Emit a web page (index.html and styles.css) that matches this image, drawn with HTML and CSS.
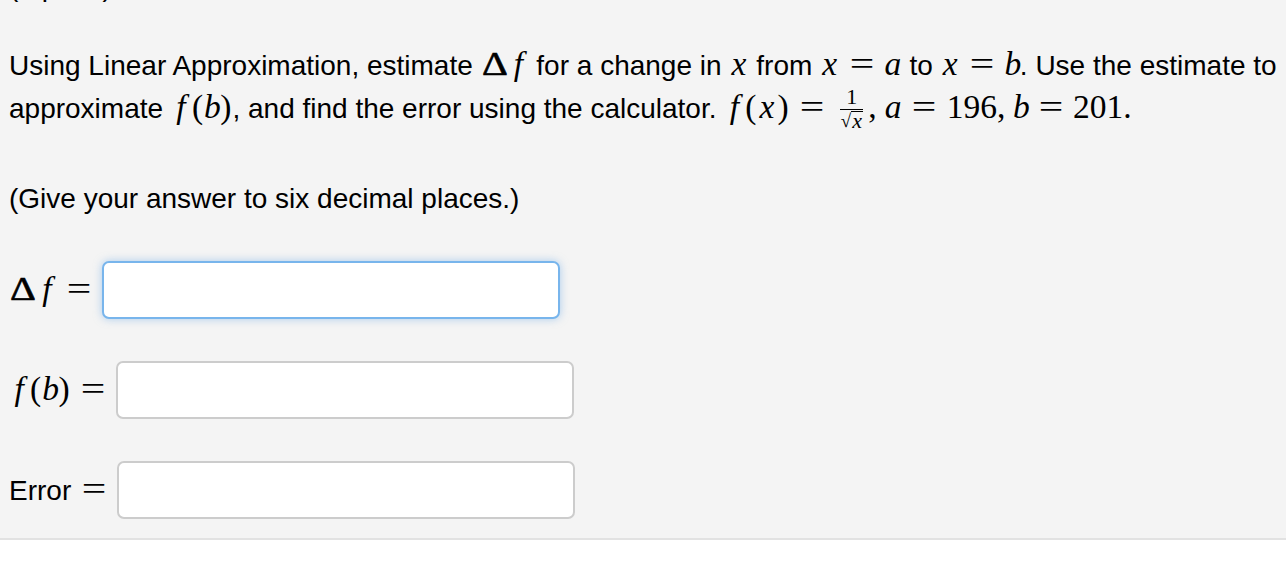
FILE: index.html
```html
<!DOCTYPE html>
<html>
<head>
<meta charset="utf-8">
<link rel="stylesheet" href="styles.css">
</head>
<body>
<div class="panel">
  <p class="points">(1 point)</p>
  <div class="question">
    <div class="line">Using Linear Approximation, estimate <span class="m"><span class="up">Δ</span><i class="vf">f</i></span> for a change in <span class="m"><i class="vx">x</i></span> from <span class="m"><i class="vx">x</i><span class="rel">=</span><i class="va">a</i></span> to <span class="m"><i class="vx">x</i><span class="rel">=</span><i class="vb">b</i></span>. Use the estimate to</div>
    <div class="line">approximate <span class="m"><i class="vf">f</i><span class="pa">(</span><i class="vb">b</i><span class="pa">)</span></span>, and find the error using the calculator. <span class="m"><i class="vf">f</i><span class="pa">(</span><i class="vx">x</i><span class="pa">)</span><span class="rel">=</span><span class="frac"><span class="num">1</span><span class="den"><span class="rad">√</span><span class="radi"><i>x</i></span></span></span><span class="cm">,</span><i class="va">a</i><span class="rel">=</span>196<span class="cm">,</span><i class="vb">b</i><span class="rel">=</span>201.</span></div>
  </div>
  <p class="note">(Give your answer to six decimal places.)</p>
  <div class="row">
    <span class="label"><span class="m"><span class="up">Δ</span><i class="vf">f</i><span class="rel last">=</span></span></span>
    <input class="answer focused" type="text">
  </div>
  <div class="row">
    <span class="label"><span class="m"><i class="vf">f</i><span class="pa">(</span><i class="vb">b</i><span class="pa">)</span><span class="rel last">=</span></span></span>
    <input class="answer" type="text">
  </div>
  <div class="row">
    <span class="label">Error<span class="m"><span class="rel last">=</span></span></span>
    <input class="answer" type="text">
  </div>
</div>
</body>
</html>
```

FILE: styles.css
```css
html, body {
  margin: 0;
  padding: 0;
  background: #ffffff;
}

.panel {
  background: #f4f4f4;
  border-bottom: 2px solid #e2e2e2;
  height: 540px;
  box-sizing: border-box;
  overflow: hidden;
  padding-left: 9px;
  display: flex;
  flex-direction: column;
  font-family: "Liberation Sans", Arial, sans-serif;
  font-size: 28px;
  line-height: 41px;
  color: #000;
}

.panel p {
  margin: 0;
  white-space: nowrap;
}

.points {
  margin-top: -34px !important;
}

.question {
  margin-top: 38px;
}

.line {
  height: 41px;
  white-space: nowrap;
}

.note {
  margin-top: 51px !important;
}

.m {
  font-family: "Liberation Serif", "Times New Roman", serif;
  font-size: 33.5px;
  line-height: 1;
}

.m i {
  font-style: italic;
}

.m i.vx, .m i.va, .m i.vb, .m i.vf {
  display: inline-block;
  text-align: center;
}

.vx { width: 0.572em; }
.va { width: 0.529em; }
.vb { width: 0.46em; }
.vf { width: 0.6em; }

.pa {
  display: inline-block;
  width: 0.389em;
  text-align: center;
}

.cm {
  display: inline-block;
  width: 0.278em;
  margin-right: 0.2em;
}

.up {
  display: inline-block;
  font-style: normal;
  transform: scaleX(1.2);
  -webkit-text-stroke: 0.6px #000;
  width: 0.833em;
  text-align: center;
}

.rel {
  display: inline-block;
  width: 0.778em;
  text-align: center;
  margin: 0 0.278em;
  transform: scaleX(1.3);
}

.rel.last {
  margin-right: 0;
}

.frac {
  display: inline-flex;
  flex-direction: column;
  align-items: center;
  font-size: 22px;
  line-height: 1;
  vertical-align: 14px;
  margin: 0 5px 0 6px;
}

.num {
  align-self: stretch;
  text-align: center;
  border-bottom: 1.5px solid #000;
  padding: 0 6px 1px;
}

.den {
  display: flex;
  align-items: flex-start;
  padding-top: 1px;
}

.rad {
  font-style: normal;
  font-size: 19px;
  line-height: 1;
}

.radi {
  border-top: 1px solid #000;
  padding: 0 1px;
  line-height: 0.85;
}

.row {
  display: flex;
  align-items: center;
  gap: 10px;
  margin-top: 42px;
}

.label {
  white-space: nowrap;
}

.answer {
  width: 458px;
  height: 58px;
  box-sizing: border-box;
  border: 2px solid #cccccc;
  border-radius: 7px;
  background: #ffffff;
  outline: none;
  margin: 0;
  padding: 0 10px;
  font-size: 28px;
}

.answer.focused {
  border-color: #78b5ec;
  box-shadow: 0 0 8px rgba(110, 170, 230, 0.55);
}
```
